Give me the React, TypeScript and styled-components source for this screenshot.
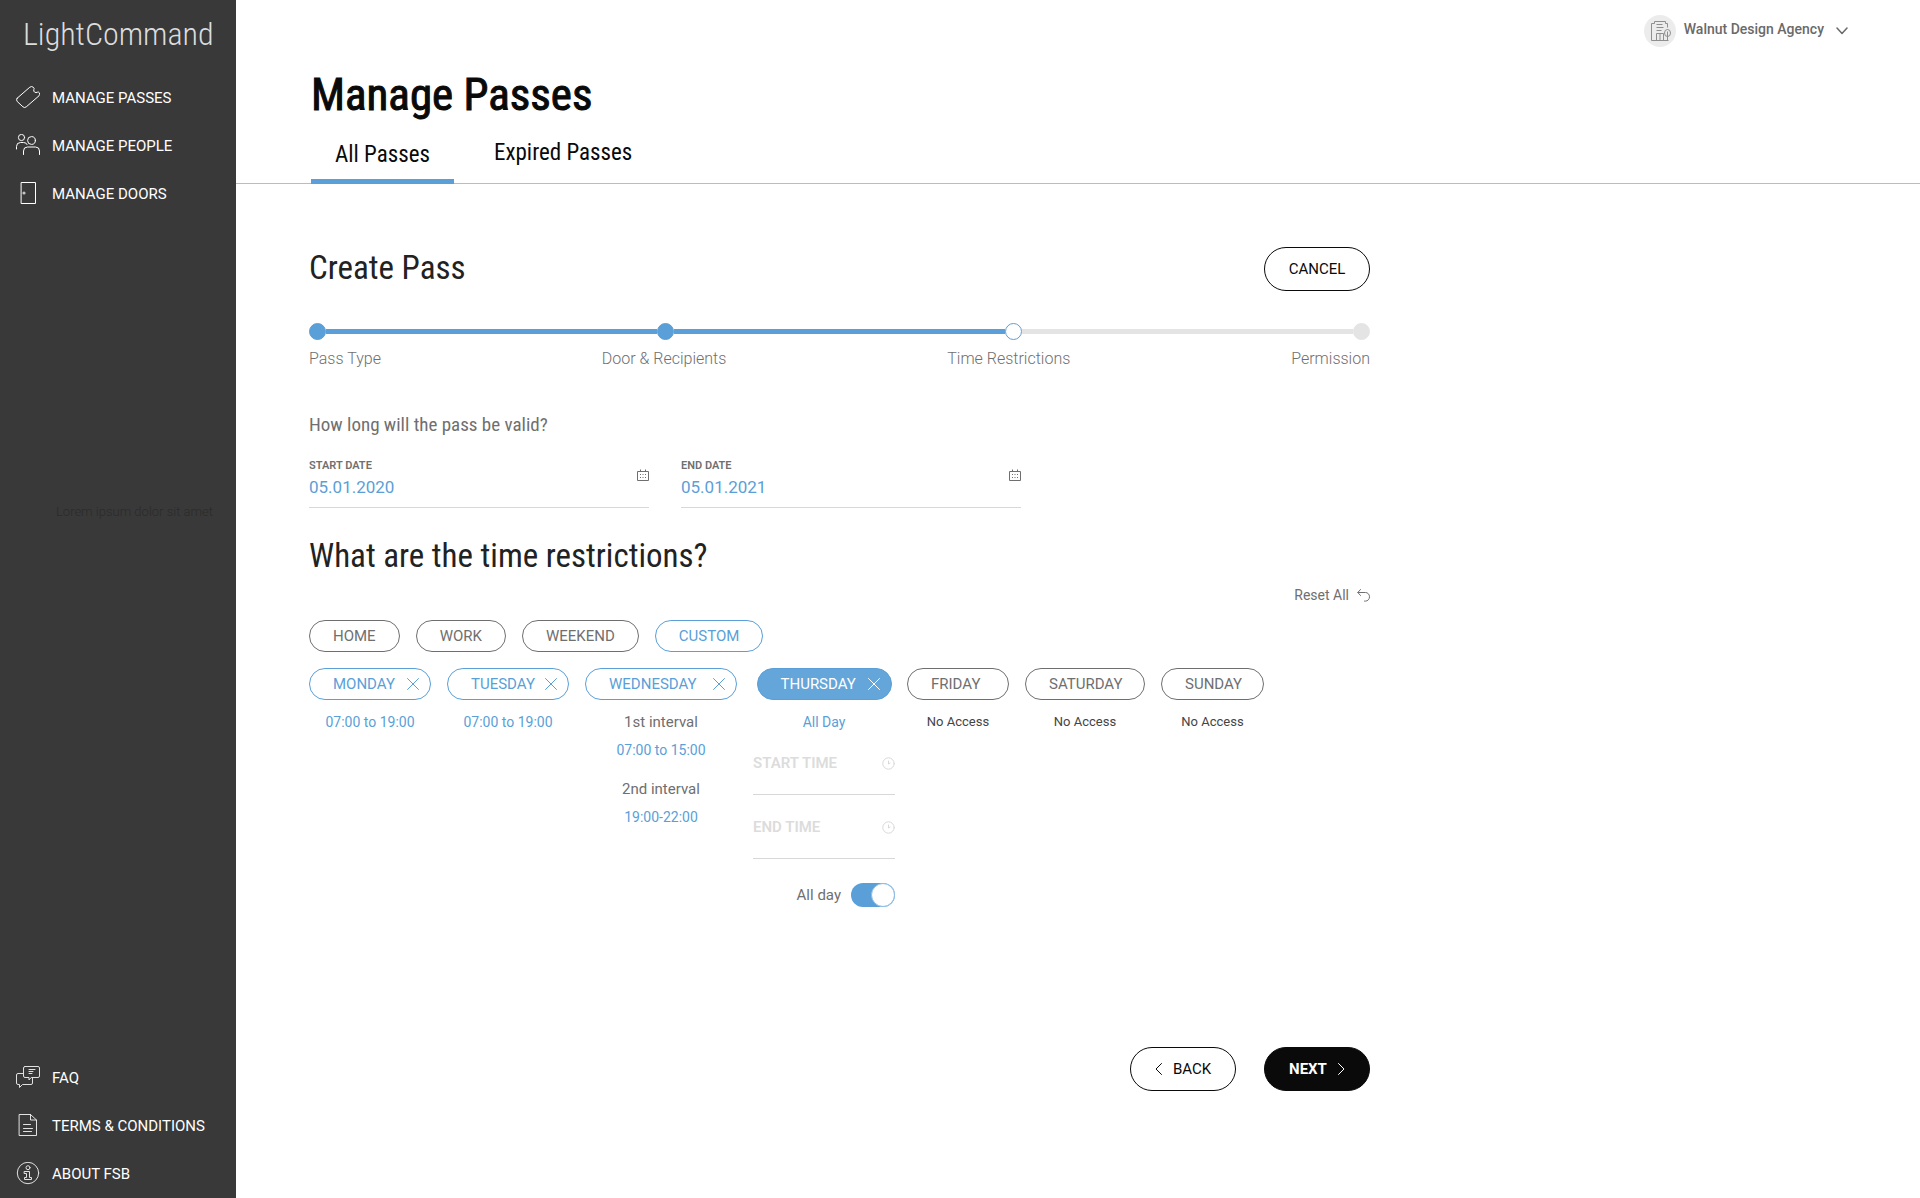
import React, { useState } from "react";
import styled, { createGlobalStyle, css } from "styled-components";

const BLUE = "#5a9fd8";
const GREY = "#6f6f6f";
const NARROW = '"Roboto Condensed", "Liberation Sans Narrow", "Liberation Sans", sans-serif';

const GlobalStyle = createGlobalStyle`
  *, *::before, *::after { box-sizing: border-box; }
  body { margin: 0; background: #fff; font-family: Roboto, "Liberation Sans", sans-serif; }
  button, input { font: inherit; color: inherit; }
  button { cursor: pointer; }
  h1, h2, h3, p, ul, ol { margin: 0; padding: 0; font-weight: 400; }
  ul, ol { list-style: none; }
`;

const Page = styled.div`
  display: flex;
  min-height: 100vh;
`;

/* Sidebar */
const Sidebar = styled.aside`
  display: flex;
  flex-direction: column;
  flex: 0 0 236px;
  min-width: 0;
  background: #393939;
  color: #fff;
`;
const Logo = styled.a`
  padding: 14px 23px 20px;
  font-family: ${NARROW};
  font-size: 32px;
  line-height: 40px;
  font-weight: 300;
  color: #dcdcdc;
  text-decoration: none;
`;
const NavItem = styled.a`
  display: flex;
  align-items: center;
  gap: 12px;
  height: 48px;
  padding: 0 16px;
  font-size: 15px;
  white-space: nowrap;
  color: inherit;
  text-decoration: none;
`;
const SideNote = styled.p`
  margin: 284px 0 auto;
  padding-left: 56px;
  font-size: 13px;
  line-height: 20px;
  font-weight: 300;
  color: #2b2b2b;
`;

/* Header */
const Main = styled.main`
  flex: 1;
  min-width: 0;
`;
const TopBar = styled.header`
  display: flex;
  justify-content: flex-end;
  height: 62px;
  padding-right: 72px;
`;
const Account = styled.button`
  display: flex;
  align-items: center;
  padding: 0;
  border: 0;
  background: none;
  font-size: 14px;
  line-height: 16px;
  font-weight: 500;
  color: #6a6a6a;
`;
const AccountName = styled.span`
  margin: 0 12px 4px 8px;
`;
const Title = styled.h1`
  padding: 6px 75px 0;
  font-family: ${NARROW};
  font-size: 45px;
  line-height: 54px;
  -webkit-text-stroke: 1px #0a0a0a;
  color: #0a0a0a;
`;
const Tabs = styled.nav`
  display: flex;
  align-items: flex-end;
  gap: 16px;
  height: 62px;
  padding: 0 75px;
  box-shadow: inset 0 -1px #a9c0d9;
`;
const Tab = styled.button<{ $active?: boolean }>`
  padding: 0 24px ${(p) => (p.$active ? 10 : 12)}px;
  border: 0;
  border-bottom: 5px solid ${(p) => (p.$active ? BLUE : "transparent")};
  background: none;
  font-family: ${NARROW};
  font-size: 23px;
  line-height: 28px;
  color: #0a0a0a;
`;

/* Form */
const Content = styled.section`
  max-width: 1207px;
  padding: 63px 73px 64px;
`;
const Between = styled.div`
  display: flex;
  justify-content: space-between;
  align-items: flex-start;
`;
const Heading = styled.h2`
  font-family: ${NARROW};
  font-size: 33px;
  line-height: 42px;
  color: #222;
`;
const ActionButton = styled.button<{ $solid?: boolean }>`
  display: inline-flex;
  align-items: center;
  justify-content: center;
  gap: 11px;
  width: 106px;
  height: 44px;
  padding: 0;
  border: 1px solid #0a0a0a;
  border-radius: 22px;
  font-size: 15px;
  font-weight: ${(p) => (p.$solid ? 700 : 400)};
  background: ${(p) => (p.$solid ? "#0a0a0a" : "#fff")};
  color: ${(p) => (p.$solid ? "#fff" : "#0a0a0a")};
`;
const Track = styled.div`
  display: flex;
  align-items: center;
  margin-top: 32px;
`;
const Dot = styled.span<{ $state: StepState }>`
  width: 17px;
  height: 17px;
  border-radius: 50%;
  border: 1px solid ${(p) => (p.$state === "todo" ? "#e4e4e4" : BLUE)};
  background: ${(p) => ({ done: BLUE, current: "#fff", todo: "#e4e4e4" })[p.$state]};
`;
const Segment = styled.span<{ $done: boolean }>`
  flex: 1;
  height: 5px;
  background: ${(p) => (p.$done ? BLUE : "#e4e4e4")};
`;
const StepLabels = styled.ol`
  display: flex;
  justify-content: space-between;
  margin-top: 9px;
  font-size: 16px;
  line-height: 20px;
  font-weight: 300;
  color: ${GREY};
`;
const Question = styled.h3`
  margin: 44px 0 21px;
  font-family: ${NARROW};
  font-size: 19px;
  line-height: 24px;
  color: ${GREY};
`;
const Dates = styled.div`
  display: flex;
  gap: 32px;
  margin-bottom: 27px;
`;
const DateField = styled.label`
  display: flex;
  align-items: center;
  width: 340px;
  padding-bottom: 8px;
  border-bottom: 1px solid #d8d8d8;
  > svg { margin-bottom: 8px; }
`;
const FieldBody = styled.span`
  display: flex;
  flex: 1;
  flex-direction: column;
  gap: 1px;
`;
const FieldLabel = styled.span`
  font-size: 11px;
  line-height: 16px;
  font-weight: 600;
  color: ${GREY};
`;
const DateInput = styled.input`
  width: 100%;
  height: 24px;
  padding: 0;
  border: 0;
  outline: 0;
  background: none;
  font-size: 17px;
  color: ${BLUE};
`;
const ResetButton = styled.button`
  display: flex;
  align-items: center;
  gap: 8px;
  margin: 8px 0 15px auto;
  padding: 0;
  border: 0;
  background: none;
  font-size: 14px;
  line-height: 20px;
  color: ${GREY};
`;
const Row = styled.div`
  display: flex;
  align-items: flex-start;
  gap: 16px;
`;
const tones = {
  plain: css`border-color: ${GREY}; background: #fff; color: ${GREY};`,
  blue: css`border-color: ${BLUE}; background: #fff; color: ${BLUE};`,
  filled: css`border-color: ${BLUE}; background: #64a5da; color: #fff;`,
};
const Chip = styled.button<{ $tone: Tone; $width?: number }>`
  display: flex;
  align-items: center;
  justify-content: space-between;
  width: ${(p) => (p.$width ? `${p.$width}px` : "auto")};
  height: 32px;
  padding: 0 11px 0 23px;
  border: 1px solid;
  border-radius: 16px;
  font-size: 15px;
  white-space: nowrap;
  ${(p) => tones[p.$tone]}
`;
const Preset = styled(Chip)`
  padding: 0 23px;
`;
const Days = styled(Row)`
  margin-top: 16px;
`;
const Day = styled.div<{ $open: boolean }>`
  display: flex;
  flex-direction: column;
  align-items: center;
  margin-right: ${(p) => (p.$open ? -4 : 0)}px;
`;
const Slot = styled.div`
  display: flex;
  flex-direction: column;
  align-items: center;
  gap: 8px;
  & + & { margin-top: 7px; }
`;
const Slots = styled.div`
  display: flex;
  flex-direction: column;
  gap: 12px;
  margin-top: 12px;
`;
const Caption = styled.p`
  font-size: 15px;
  line-height: 20px;
  color: ${GREY};
`;
const Hours = styled.p<{ $muted?: boolean }>`
  font-size: ${(p) => (p.$muted ? 13 : 14)}px;
  line-height: 20px;
  color: ${(p) => (p.$muted ? "#444" : BLUE)};
`;
const TimeFields = styled.div`
  display: flex;
  flex-direction: column;
  gap: 22px;
  margin-top: 21px;
`;
const TimeField = styled.label`
  display: flex;
  align-items: center;
  width: 142px;
  padding-bottom: 21px;
  border-bottom: 1px solid #d8d8d8;
  color: #d8d8d8;
`;
const TimeInput = styled.input`
  flex: 1;
  width: 0;
  height: 20px;
  padding: 0;
  border: 0;
  outline: 0;
  background: none;
  font-size: 15px;
  font-weight: 600;
  &::placeholder { color: #dcdcdc; opacity: 1; }
`;
const AllDay = styled.label`
  display: flex;
  align-items: center;
  align-self: flex-end;
  gap: 10px;
  margin-top: 24px;
  font-size: 15px;
  color: ${GREY};
`;
const Toggle = styled.input`
  appearance: none;
  display: flex;
  width: 44px;
  height: 24px;
  margin: 0;
  border-radius: 12px;
  background: #d8d8d8;
  cursor: pointer;
  &::before {
    content: "";
    width: 24px;
    height: 24px;
    border: 1px solid #d8d8d8;
    border-radius: 50%;
    background: #fff;
  }
  &:checked { justify-content: flex-end; background: ${BLUE}; }
  &:checked::before { border-color: #8dbce4; }
`;
const Footer = styled.footer`
  display: flex;
  justify-content: flex-end;
  gap: 28px;
  margin-top: 140px;
`;

/* Icons */
const Icon = ({ w, h = w, children }: { w: number; h?: number; children: React.ReactNode }) => (
  <svg width={w} height={h} viewBox={`0 0 ${w} ${h}`} fill="none" stroke="currentColor" strokeLinecap="round" strokeLinejoin="round" aria-hidden="true">
    {children}
  </svg>
);
const PassIcon = () => (
  <Icon w={24}>
    <path d="M1.2 12.2 13.8 1.2q1.8-1.3 3.4 0 1.5 1 .6 2.5-.4 1.6.9 2.5 1.3.8 2.6 0 1.4-.5 2 .6 1 1.5-.3 3L10.3 20.8q-1.7 1.5-3.4 0L1.3 15.6q-1.6-1.7-.1-3.4Z" />
  </Icon>
);
const PeopleIcon = () => (
  <Icon w={24}>
    <circle cx="5.5" cy="3.5" r="3.1" />
    <circle cx="15.5" cy="6.5" r="3.9" />
    <path d="M.5 15v-2.5q0-4 4-4h3q3 0 3.6 2M7.5 20.5V17q0-4 4-4h8q4 0 4 4v3.5" />
  </Icon>
);
const DoorIcon = () => (
  <Icon w={24}>
    <path d="M5.5.5h14v21h-14Z" />
    <circle cx="8" cy="11" r="1.6" fill="currentColor" stroke="none" opacity=".7" />
  </Icon>
);
const FaqIcon = () => (
  <Icon w={24}>
    <g opacity=".85">
      <path d="M9 .5h13q1.5 0 1.5 1.5v8q0 1.5-1.5 1.5h-6.8L13 14v-2.5H9q-1.5 0-1.5-1.5V2Q7.500.5 9 .5Z" />
      <path d="M7.5 7.5H2Q.5 7.5.5 9v8q0 1.5 1.5 1.5h1.5V21.5L6.5 18.5H15q1.5 0 1.5-1.5v-5.5M13 3.5h6M13 5.5h4M13 7.5h3" />
    </g>
  </Icon>
);
const TermsIcon = () => (
  <Icon w={24}>
    <path opacity=".85" d="M3.5.5h11l6 5.500v15.5h-17ZM14.5.5V6h6M7.5 10.5h7M7.5 14.5h9M7.5 17.5h8" />
  </Icon>
);
const AboutIcon = () => (
  <Icon w={24}>
    <g opacity=".85">
      <circle cx="12" cy="11" r="10.7" />
      <circle cx="12" cy="5.7" r="2" />
      <path d="M8.5 9.5h5v6h2v2h-7v-2h2v-4h-2Z" />
    </g>
  </Icon>
);
const CloseIcon = () => <Icon w={12}><path d="M.5.5l11 11M11.5.5l-11 11" /></Icon>;
const CalendarIcon = () => (
  <Icon w={12} h={12}>
    <path d="M.5 2.500h11v9H.5ZM3.5.5v2M8.5.5v2" stroke={GREY} strokeLinecap="butt" />
    <path d="M3 5.5h1M5.5 5.5h1M8 5.5h1M3 8.5h1M5.5 8.5h1M8 8.5h1" stroke={GREY} strokeLinecap="butt" />
  </Icon>
);
const ClockIcon = () => <Icon w={13}><circle cx="6.5" cy="6.5" r="5.7" /><path d="M6.5 4v3l1.5-1" /></Icon>;
const ResetIcon = () => <Icon w={13}><path d="M3.5.5.8 3.5l2.7 3M1 3.5h7.5a4 4.3 0 0 1 0 8.6H7.5" /></Icon>;
const ArrowIcon = ({ left }: { left?: boolean }) => (
  <Icon w={7} h={12}><path d={left ? "M6.5.5 1 6l5.5 5.5" : "M.5.5 6 6 .5 11.5"} /></Icon>
);
const DownIcon = () => <Icon w={12} h={8}><path d="M1 1l5 5.5L11 1" strokeWidth="1.5" /></Icon>;
const CompanyIcon = () => (
  <svg width="32" height="32" viewBox="0 0 32 32" fill="none" stroke="#8f8f8f" strokeWidth="1" aria-hidden="true">
    <circle cx="16" cy="16" r="16" fill="#ececec" stroke="none" />
    <path d="M23.5 12.5V8.5h-2v-2h-11v2h-3v17h17M12.5 9.5h6M12.5 12.5h7M12.5 15.5h5M12.5 25.5v-7h7v7M16 18.5v7M23.5 16.5v9" />
    <ellipse cx="23.5" cy="18" rx="3" ry="3.5" />
  </svg>
);

type StepState = "done" | "current" | "todo";
type Tone = "plain" | "blue" | "filled";

const steps: { name: string; state: StepState }[] = [
  { name: "Pass Type", state: "done" },
  { name: "Door & Recipients", state: "done" },
  { name: "Time Restrictions", state: "current" },
  { name: "Permission", state: "todo" },
];

type DayInfo = { name: string; width: number; tone: Tone; slots: { caption?: string; hours: string }[] };
const days: DayInfo[] = [
  { name: "MONDAY", width: 122, tone: "blue", slots: [{ hours: "07:00 to 19:00" }] },
  { name: "TUESDAY", width: 122, tone: "blue", slots: [{ hours: "07:00 to 19:00" }] },
  {
    name: "WEDNESDAY", width: 152, tone: "blue",
    slots: [{ caption: "1st interval", hours: "07:00 to 15:00" }, { caption: "2nd interval", hours: "19:00-22:00" }],
  },
  { name: "THURSDAY", width: 135, tone: "filled", slots: [{ hours: "All Day" }] },
  { name: "FRIDAY", width: 102, tone: "plain", slots: [{ hours: "No Access" }] },
  { name: "SATURDAY", width: 120, tone: "plain", slots: [{ hours: "No Access" }] },
  { name: "SUNDAY", width: 103, tone: "plain", slots: [{ hours: "No Access" }] },
];

const DayColumn = ({ day }: { day: DayInfo }) => {
  const [allDay, setAllDay] = useState(true);
  const open = day.tone === "filled";
  return (
    <Day $open={open}>
      <Chip type="button" $tone={day.tone} $width={day.width}>
        {day.name}
        {day.tone !== "plain" && <CloseIcon />}
      </Chip>
      <Slots>
        {day.slots.map((slot) => (
          <Slot key={slot.hours}>
            {slot.caption && <Caption>{slot.caption}</Caption>}
            <Hours $muted={day.tone === "plain"}>{slot.hours}</Hours>
          </Slot>
        ))}
      </Slots>
      {open && (
        <>
          <TimeFields>
            <TimeField><TimeInput aria-label="Start time" placeholder="START TIME" /><ClockIcon /></TimeField>
            <TimeField><TimeInput aria-label="End time" placeholder="END TIME" /><ClockIcon /></TimeField>
          </TimeFields>
          <AllDay>
            All day
            <Toggle type="checkbox" role="switch" checked={allDay} onChange={(e) => setAllDay(e.target.checked)} />
          </AllDay>
        </>
      )}
    </Day>
  );
};

export default function App() {
  return (
    <Page>
      <GlobalStyle />
      <Sidebar>
        <Logo href="#">LightCommand</Logo>
        <nav>
          <NavItem href="#passes"><PassIcon />MANAGE PASSES</NavItem>
          <NavItem href="#people"><PeopleIcon />MANAGE PEOPLE</NavItem>
          <NavItem href="#doors"><DoorIcon />MANAGE DOORS</NavItem>
        </nav>
        <SideNote>Lorem ipsum dolor sit amet</SideNote>
        <nav>
          <NavItem href="#faq"><FaqIcon />FAQ</NavItem>
          <NavItem href="#terms"><TermsIcon />TERMS &amp; CONDITIONS</NavItem>
          <NavItem href="#about"><AboutIcon />ABOUT FSB</NavItem>
        </nav>
      </Sidebar>
      <Main>
        <TopBar>
          <Account type="button"><CompanyIcon /><AccountName>Walnut Design Agency</AccountName><DownIcon /></Account>
        </TopBar>
        <Title>Manage Passes</Title>
        <Tabs>
          <Tab type="button" $active>All Passes</Tab>
          <Tab type="button">Expired Passes</Tab>
        </Tabs>
        <Content>
          <Between>
            <Heading>Create Pass</Heading>
            <ActionButton type="button">CANCEL</ActionButton>
          </Between>
          <Track>
            {steps.map((step, i) => (
              <React.Fragment key={step.name}>
                {i > 0 && <Segment $done={step.state !== "todo"} />}
                <Dot $state={step.state} />
              </React.Fragment>
            ))}
          </Track>
          <StepLabels>
            {steps.map((step) => <li key={step.name}>{step.name}</li>)}
          </StepLabels>
          <Question>How long will the pass be valid?</Question>
          <Dates>
            <DateField>
              <FieldBody><FieldLabel>START DATE</FieldLabel><DateInput defaultValue="05.01.2020" /></FieldBody>
              <CalendarIcon />
            </DateField>
            <DateField>
              <FieldBody><FieldLabel>END DATE</FieldLabel><DateInput defaultValue="05.01.2021" /></FieldBody>
              <CalendarIcon />
            </DateField>
          </Dates>
          <Heading>What are the time restrictions?</Heading>
          <ResetButton type="button">Reset All<ResetIcon /></ResetButton>
          <Row>
            <Preset type="button" $tone="plain">HOME</Preset>
            <Preset type="button" $tone="plain">WORK</Preset>
            <Preset type="button" $tone="plain">WEEKEND</Preset>
            <Preset type="button" $tone="blue">CUSTOM</Preset>
          </Row>
          <Days>
            {days.map((day) => <DayColumn key={day.name} day={day} />)}
          </Days>
          <Footer>
            <ActionButton type="button"><ArrowIcon left />BACK</ActionButton>
            <ActionButton type="button" $solid>NEXT<ArrowIcon /></ActionButton>
          </Footer>
        </Content>
      </Main>
    </Page>
  );
}
